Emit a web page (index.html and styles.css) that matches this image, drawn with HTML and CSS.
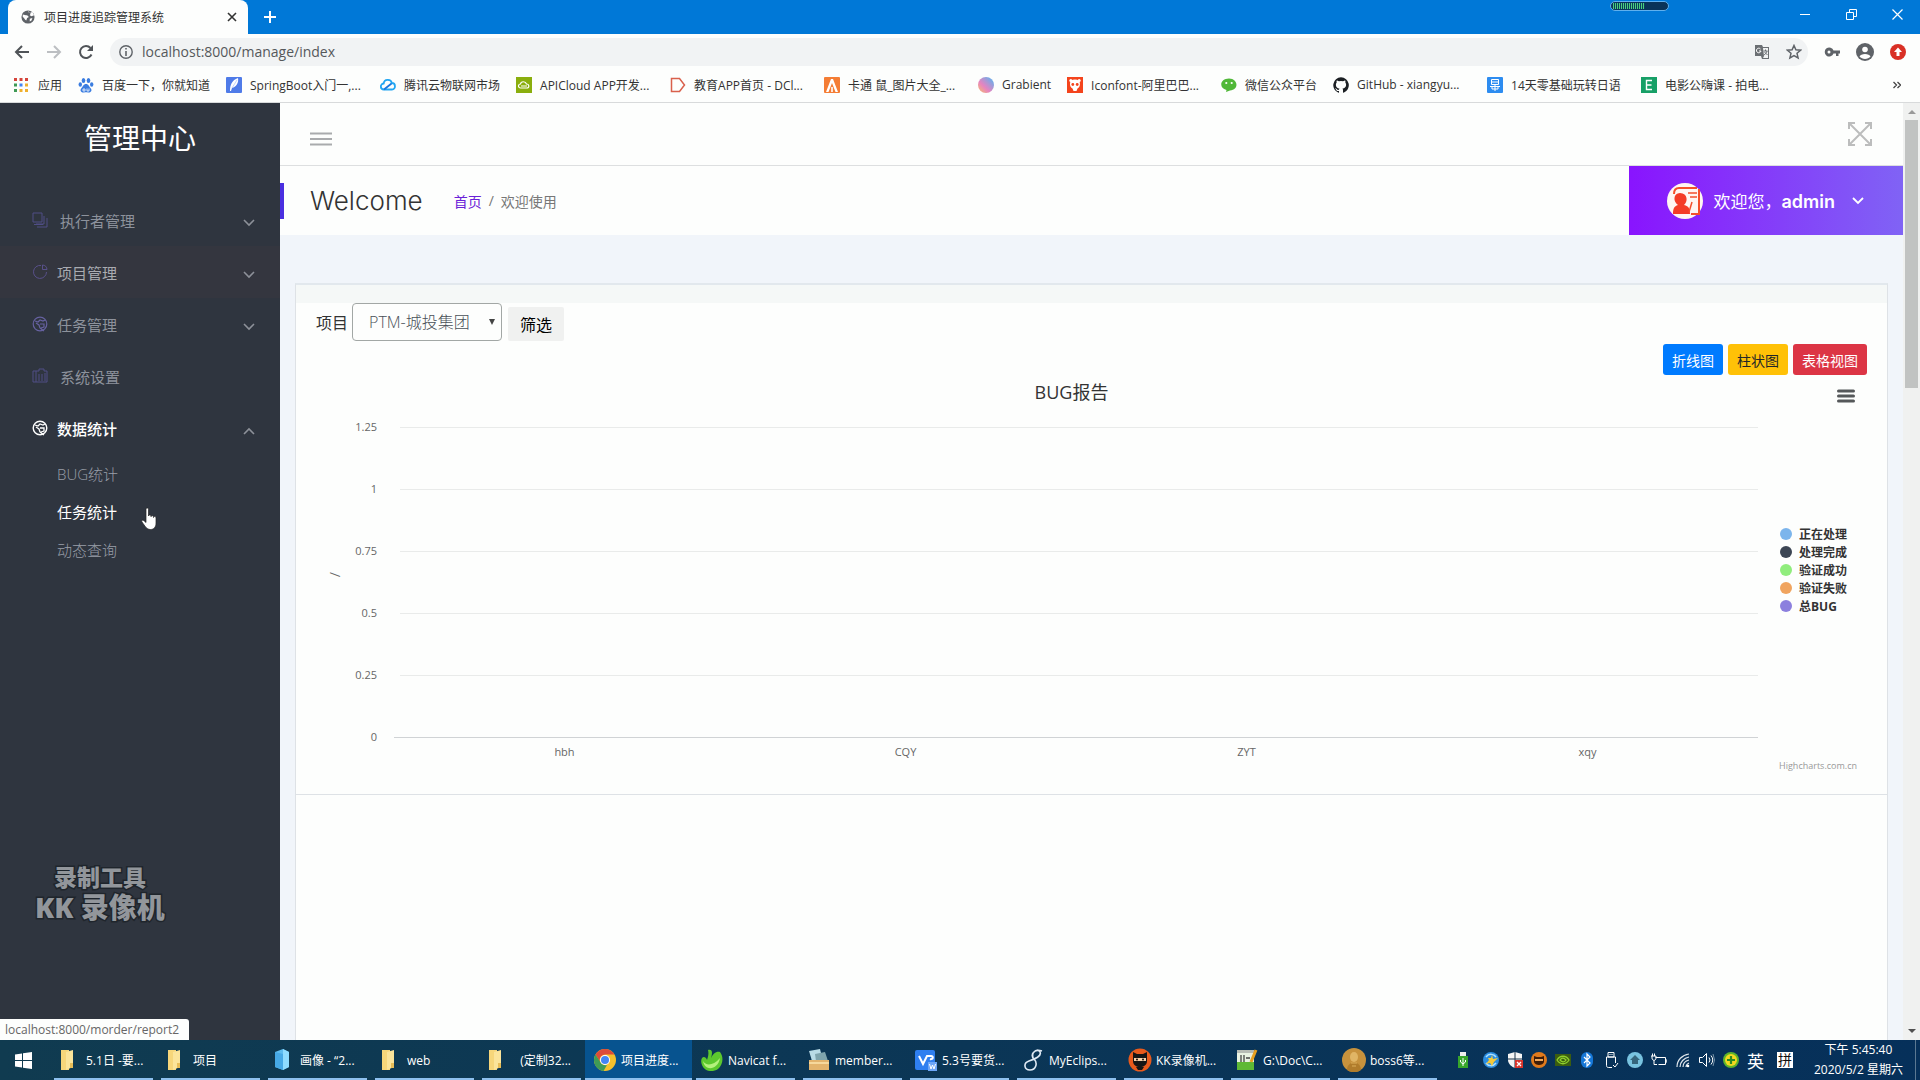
FILE: index.html
```html
<!DOCTYPE html>
<html lang="zh-CN">
<head>
  <meta charset="UTF-8" />
  <meta name="viewport" content="width=device-width, initial-scale=1" />
  <title>项目进度追踪管理系统</title>
  <link rel="stylesheet" href="styles.css">
</head>
<body>

  <!-- Browser window -->
  <header class="browser">
    <div class="titlebar">
      <div class="tab">
        <svg width="14" height="14" viewBox="0 0 16 16"><circle cx="8" cy="8" r="7.5" fill="#5f6368"/><path d="M2 5c2 0 3 1 5 1l2 2-2 1-1 3c-2-1-2-3-4-4zM8 1c0 2 2 2 3 2l2-1 2 4-3 1-2-1 1-2zM10 10l3-1-1 3-2 1z" fill="#fff"/></svg>
        <span class="tab-title">项目进度追踪管理系统</span>
        <button class="tab-close" aria-label="关闭标签页"><svg width="10" height="10" viewBox="0 0 10 10"><path d="M1 1l8 8M9 1l-8 8" stroke="#333" stroke-width="1.6"/></svg></button>
      </div>
      <button class="new-tab" aria-label="新标签页"><svg width="12" height="12" viewBox="0 0 12 12"><path d="M6 0v12M0 6h12" stroke="#fff" stroke-width="2"/></svg></button>
      <div class="window-controls">
        <button aria-label="最小化"><svg width="10" height="10" viewBox="0 0 10 10"><path d="M0 5.5h10" stroke="#fff"/></svg></button>
        <button aria-label="还原"><svg width="11" height="11" viewBox="0 0 11 11"><path d="M.5 3.5h7v7h-7zM3.500 3V.5h7v7H8" fill="none" stroke="#fff"/></svg></button>
        <button aria-label="关闭"><svg width="11" height="11" viewBox="0 0 11 11"><path d="M.5.5l10 10M10.500.5l-10 10" stroke="#fff" stroke-width="1.200"/></svg></button>
      </div>
    </div>

    <div class="toolbar">
      <button aria-label="后退"><svg width="16" height="16" viewBox="0 0 16 16"><path d="M15 8H2M8 2L2 8l6 6" fill="none" stroke="#505458" stroke-width="2"/></svg></button>
      <button aria-label="前进"><svg width="16" height="16" viewBox="0 0 16 16"><path d="M1 8h13M8 2l6 6-6 6" fill="none" stroke="#bcbfc2" stroke-width="2"/></svg></button>
      <button aria-label="重新加载"><svg width="16" height="16" viewBox="0 0 16 16"><path d="M13.500 10.500A6 6 0 1 1 12.500 4" fill="none" stroke="#505458" stroke-width="2"/><path d="M15 1v6H9z" fill="#505458"/></svg></button>
      <div class="address">
        <svg width="14" height="14" viewBox="0 0 14 14"><circle cx="7" cy="7" r="6.200" fill="none" stroke="#5f6368" stroke-width="1.400"/><path d="M7 6v5M7 3v1.600" stroke="#5f6368" stroke-width="1.600"/></svg>
        <input class="url" type="text" value="localhost:8000/manage/index" aria-label="地址栏">
        <svg width="16" height="16" viewBox="0 0 16 16"><path d="M1 1h7l1 2h6v12H8l-1-3H1z" fill="#6b6f73"/><path d="M9 4h5v10H9l1-2z" fill="#f1f3f4"/><path d="M6.500 5A2.300 2.300 0 1 0 7 7H5" fill="none" stroke="#fff"/><path d="M9.500 7h4M11.500 5.500V7M13 7c0 2-2 3-3 4M10.500 8l3 3" fill="none" stroke="#6b6f73"/></svg>
        <svg width="16" height="16" viewBox="0 0 16 16"><path d="M8 1.500l1.900 4.300 4.700.4-3.600 3.100 1.100 4.600L8 11.500l-4.100 2.400L5 9.300 1.400 6.200l4.700-.4z" fill="none" stroke="#5f6368" stroke-width="1.500"/></svg>
      </div>
      <svg width="16" height="10" viewBox="0 0 16 10"><path d="M9.500 3.600A4.500 4.500 0 1 0 9.500 6.400H12V9h2.500V6.400H16V3.600zM5 6.500a1.500 1.500 0 1 1 0-3 1.500 1.500 0 0 1 0 3z" fill="#5f6368"/></svg>
      <svg width="18" height="18" viewBox="0 0 18 18"><circle cx="9" cy="9" r="9" fill="#5f6368"/><circle cx="9" cy="6.500" r="2.800" fill="#fff"/><path d="M3.500 13.500c1-3.500 10-3.500 11 0-2.500 3.300-8.500 3.300-11 0z" fill="#fff"/></svg>
      <svg width="16" height="16" viewBox="0 0 16 16"><circle cx="8" cy="8" r="8" fill="#d93025"/><path d="M8 3.500l4 4.500H9.500v4h-3V8H4z" fill="#fff"/></svg>
    </div>

    <nav class="bookmarks" aria-label="书签栏">
      <a href="#"><svg width="16" height="14" viewBox="0 0 16 14"><path d="M0 0h3v3H0zM5.500 0h3v3h-3zM11 0h3v3h-3z" fill="#d5453b"/><path d="M0 5.500h3v3H0z" fill="#3f9a56"/><path d="M5.500 5.500h3v3h-3z" fill="#4285f4"/><path d="M11 5.500h3v3h-3zM5.500 11h3v3h-3zM11 11h3v3h-3z" fill="#f0b02e"/><path d="M0 11h3v3H0z" fill="#3f9a56"/></svg><span>应用</span></a>
      <a href="#"><svg width="16" height="16" viewBox="0 0 16 16"><g fill="#3b7de0"><ellipse cx="5.500" cy="3.500" rx="1.800" ry="2.500"/><ellipse cx="10.500" cy="3.500" rx="1.800" ry="2.500"/><ellipse cx="2.300" cy="7.500" rx="1.700" ry="2.200"/><ellipse cx="13.700" cy="7.500" rx="1.700" ry="2.200"/><path d="M8 7c2.500 0 3 2.500 4.500 4 2.500 3-.5 5-2.500 4.500-1.500-.4-2.500-.4-4 0C4 16 1 14 3.500 11 5 9.500 5.500 7 8 7z"/></g><path d="M5 12h2v2H5zM9 11.500V14h2v-2.500" fill="none" stroke="#fff" stroke-width=".8"/></svg><span>百度一下，你就知道</span></a>
      <a href="#" class="long"><svg width="16" height="16" viewBox="0 0 16 16"><rect width="16" height="16" rx="1" fill="#4f7be8"/><path d="M4 14C4 8 6 3 12 1c1 5-2 9-6 10l-1 3z" fill="#fff"/><path d="M6 11l5-8" stroke="#9bb6f5" stroke-width=".6"/></svg><span>SpringBoot入门一,...</span></a>
      <a href="#"><svg width="16" height="16" viewBox="0 0 16 16"><path d="M4 12.500a3 3 0 0 1-.3-6C4 1.800 11 1.500 11.800 6 16 6 16 12.500 12 12.500z" fill="none" stroke="#22a6f2" stroke-width="1.800"/><path d="M4 12.500l7.500-6" stroke="#1976e0" stroke-width="1.800"/></svg><span>腾讯云物联网市场</span></a>
      <a href="#" class="long"><svg width="16" height="16" viewBox="0 0 16 16"><rect width="16" height="16" fill="#8aae0d"/><path d="M4.500 11a2 2 0 0 1 0-4c.5-3 5-3 6 0 3 0 3 4 .5 4zM5 9h6" fill="none" stroke="#fff" stroke-width="1.200"/></svg><span>APICloud APP开发...</span></a>
      <a href="#" class="long"><svg width="16" height="16" viewBox="0 0 16 16"><path d="M1.500 1.500h8l5 6.500-5 6.500h-8z" fill="none" stroke="#d9604c" stroke-width="1.500"/></svg><span>教育APP首页 - DCl...</span></a>
      <a href="#" class="long"><svg width="16" height="16" viewBox="0 0 16 16"><rect width="16" height="16" rx="1" fill="#f47d35"/><path d="M2 15L7 2h2l5 13h-2.500L8 6l-3.500 9zM7.200 10h1.600v5H7.200z" fill="#fff"/></svg><span>卡通 鼠_图片大全_...</span></a>
      <a href="#"><svg width="16" height="16" viewBox="0 0 16 16"><defs><linearGradient id="grab" x1="0" y1="1" x2="1" y2="0"><stop offset="0" stop-color="#f7c06b"/><stop offset=".4" stop-color="#e684c0"/><stop offset="1" stop-color="#4bb8f5"/></linearGradient></defs><circle cx="8" cy="8" r="8" fill="url(#grab)"/></svg><span>Grabient</span></a>
      <a href="#" class="long"><svg width="16" height="16" viewBox="0 0 16 16"><rect width="16" height="16" fill="#f4441c"/><circle cx="3.800" cy="3.500" r="1.500" fill="#fff"/><circle cx="12.200" cy="3.500" r="1.500" fill="#fff"/><path d="M8 2.500c7 0 5.500 8 2.500 9L9.500 14h-3l-1-2.500C2.500 10.500 1 2.500 8 2.500z" fill="#fff"/><circle cx="5.800" cy="7.500" r="1.400" fill="#f4441c"/><circle cx="10.200" cy="7.500" r="1.400" fill="#f4441c"/></svg><span>Iconfont-阿里巴巴...</span></a>
      <a href="#"><svg width="16" height="16" viewBox="0 0 16 16"><path d="M8 1.500c9 0 10.500 11 1 12l-4 1.500.5-2C-3 10.500-.5 1.500 8 1.500z" fill="#50b838"/><circle cx="5.300" cy="6" r="1.100" fill="#fff"/><circle cx="10.700" cy="6" r="1.100" fill="#fff"/></svg><span>微信公众平台</span></a>
      <a href="#" class="long"><svg width="16" height="16" viewBox="0 0 16 16"><path d="M8 .2a8 8 0 0 0-2.500 15.500c.4.100.5-.2.500-.400v-1.400c-2.200.5-2.700-1-2.700-1-.4-.9-.9-1.200-.9-1.200-.7-.5.100-.5.100-.5.800.100 1.200.800 1.200.800.700 1.200 1.900.900 2.300.700.100-.5.300-.900.500-1.100-1.800-.2-3.600-.9-3.600-4 0-.8.300-1.600.8-2.100-.1-.2-.4-1 .1-2.100 0 0 .7-.2 2.200.8a7.500 7.500 0 0 1 4 0c1.500-1 2.200-.8 2.200-.8.4 1.100.2 1.900.1 2.100.5.5.8 1.300.8 2.100 0 3.100-1.900 3.800-3.700 4 .3.300.6.800.6 1.500v2.200c0 .2.100.5.600.4A8 8 0 0 0 8 .2z" fill="#1b1f23"/></svg><span>GitHub - xiangyu...</span></a>
      <a href="#" class="long"><svg width="16" height="16" viewBox="0 0 16 16"><rect width="16" height="16" rx="1" fill="#2d8cf0"/><path d="M4.500 2.500h7v5h-7zM4.500 5h7M3 9.500h10M8 7.500V14M5 9.500V12h6V9.500" fill="none" stroke="#fff"/></svg><span>14天零基础玩转日语</span></a>
      <a href="#"><svg width="16" height="16" viewBox="0 0 16 16"><rect width="16" height="16" fill="#17a067"/><path d="M11 3.500H5.500v9H11M5.500 8h5" fill="none" stroke="#fff" stroke-width="1.400"/></svg><span>电影公嗨课 - 拍电...</span></a>
      <button class="more" aria-label="更多书签"><svg width="8" height="8" viewBox="0 0 8 8"><path d="M.5 1l3 3-3 3M4.500 1l3 3-3 3" fill="none" stroke="#444" stroke-width="1.300"/></svg></button>
    </nav>
  </header>

  <div class="page">
    <aside class="sidebar">
      <h1>管理中心</h1>
      <ul class="menu">
        <li><a href="#"><svg width="16" height="16" viewBox="0 0 16 16"><path d="M1 1h9v9H1zM12 4v8H4M15 6v9H5M2 12.500h9" fill="none" stroke="#504e86"/></svg><span class="spaced">执行者管理</span><svg class="arrow" width="12" height="8" viewBox="0 0 12 8"><path d="M1 1l5 5 5-5" fill="none" stroke="#8d9199" stroke-width="1.600"/></svg></a></li>
        <li class="hover"><a href="#"><svg width="16" height="16" viewBox="0 0 16 16"><path d="M9 1.500a6.500 6.500 0 1 0 5.500 6.500M10.500 1v4.500H15C15 3 13 1 10.500 1z" fill="none" stroke="#58508a"/></svg><span>项目管理</span><svg class="arrow" width="12" height="8" viewBox="0 0 12 8"><path d="M1 1l5 5 5-5" fill="none" stroke="#8d9199" stroke-width="1.600"/></svg></a></li>
        <li><a href="#"><svg width="16" height="16" viewBox="0 0 16 16"><circle cx="8" cy="8" r="6.800" fill="none" stroke="#6661a0" stroke-width="1.200"/><path d="M3 5l3 1 2-2 3 1 2-1M4 7l3 2 1 3M8 8h4v3l-3 1M8 12l4 3" fill="none" stroke="#6661a0" stroke-width="1.200"/></svg><span>任务管理</span><svg class="arrow" width="12" height="8" viewBox="0 0 12 8"><path d="M1 1l5 5 5-5" fill="none" stroke="#8d9199" stroke-width="1.600"/></svg></a></li>
        <li><a href="#"><svg width="16" height="16" viewBox="0 0 16 16"><path d="M1 3h3v11H1zM4 3h3V1h5v2h3v11H4M7 6v7M10 6v7M13 5v8" fill="none" stroke="#504e86"/></svg><span class="spaced">系统设置</span></a></li>
        <li class="open">
          <a href="#"><svg width="16" height="16" viewBox="0 0 16 16"><circle cx="8" cy="8" r="6.800" fill="none" stroke="#fff" stroke-width="1.400"/><path d="M3 5l3 1 2-2 3 1 2-1M4 7l3 2 1 3M8 8h4v3l-3 1M8 12l4 3" fill="none" stroke="#fff" stroke-width="1.300"/></svg><span>数据统计</span><svg class="arrow" width="12" height="8" viewBox="0 0 12 8"><path d="M1 7l5-5 5 5" fill="none" stroke="#8d9199" stroke-width="1.600"/></svg></a>
          <ul class="submenu">
            <li><a href="#">BUG统计</a></li>
            <li><a href="#" class="current">任务统计</a></li>
            <li><a href="#">动态查询</a></li>
          </ul>
        </li>
      </ul>
    </aside>

    <main class="content">
      <div class="topbar">
        <button class="toggle" aria-label="菜单"><svg width="24" height="14" viewBox="0 0 24 14"><path d="M1 1.500h22M1 7h22M1 12.500h22" stroke="#a9abad" stroke-width="2"/></svg></button>
        <button aria-label="全屏"><svg width="24" height="24" viewBox="0 0 24 24"><path d="M1 7V1h6M17 1h6v6M23 17v6h-6M7 23H1v-6M1 1l22 22M23 1L1 23" fill="none" stroke="#bcbdbd" stroke-width="2"/></svg></button>
      </div>

      <div class="page-title">
        <h2>Welcome</h2>
        <p class="breadcrumb"><a href="#">首页</a><span>/</span><span>欢迎使用</span></p>
        <button class="user">
          <svg width="36" height="36" viewBox="0 0 36 36"><circle cx="18" cy="18" r="18" fill="#fff6f2"/><path d="M7 11c0-4 2-6 5-6h18M32 6v25H24" fill="none" stroke="#f4502c" stroke-width="2"/><path d="M21 10h9M23 14h7" stroke="#f4502c" stroke-width="1.600"/><path d="M13 10c8 0 8 9 4 12 5 1 6 4 6 9H6c0-5 1-8 5-9-5-3-5-12 2-12z" fill="#f43c26"/><path d="M25 19l-3 10" stroke="#f4502c" stroke-width="1.500"/></svg>
          <span class="user-name">欢迎您，<b>admin</b></span>
          <svg width="14" height="9" viewBox="0 0 14 9"><path d="M2 2l5 5 5-5" fill="none" stroke="#fff" stroke-width="1.800"/></svg>
        </button>
      </div>

      <section class="card report">
        <form class="filter">
          <label for="project">项目</label>
          <span class="select-box">
            <select id="project"><option>PTM-城投集团</option></select>
          </span>
          <button type="button">筛选</button>
        </form>
        <div class="views">
          <button class="blue">折线图</button>
          <button class="yellow">柱状图</button>
          <button class="red">表格视图</button>
        </div>

        <div class="chart">
          <div class="chart-head">
            <h3>BUG报告</h3>
            <button aria-label="图表菜单"><svg width="18" height="14" viewBox="0 0 18 14"><path d="M1.500 2h15M1.500 7h15M1.500 12h15" stroke="#55585a" stroke-width="3" stroke-linecap="round"/></svg></button>
          </div>
          <div class="chart-body">
            <span class="y-title">/</span>
            <ul class="y-labels"><li>1.25</li><li>1</li><li>0.75</li><li>0.5</li><li>0.25</li><li>0</li></ul>
            <div class="plot">
              <div class="grid-lines"><i></i><i></i><i></i><i></i><i></i></div>
              <ul class="x-labels"><li>hbh</li><li>CQY</li><li>ZYT</li><li>xqy</li></ul>
            </div>
            <div class="chart-side">
              <ul class="legend">
                <li class="doing">正在处理</li>
                <li class="done">处理完成</li>
                <li class="passed">验证成功</li>
                <li class="failed">验证失败</li>
                <li class="total">总BUG</li>
              </ul>
              <a class="credits" href="#">Highcharts.com.cn</a>
            </div>
          </div>
        </div>
      </section>
      <section class="card next"></section>
    </main>

    <div class="scrollbar">
      <svg width="8" height="5" viewBox="0 0 8 5"><path d="M0 5l4-4 4 4z" fill="#999"/></svg>
      <div class="thumb"></div>
      <svg width="8" height="5" viewBox="0 0 8 5"><path d="M0 0l4 4 4-4z" fill="#505050"/></svg>
    </div>

    <p class="watermark"><span>录制工具</span><span class="big">KK 录像机</span></p>
    <div class="status">localhost:8000/morder/report2</div>
  </div>

  <!-- Desktop taskbar -->
  <footer class="taskbar">
    <button class="start" aria-label="开始"><svg width="17" height="17" viewBox="0 0 17 17"><path d="M0 2.500l7-1V8H0zM8 1.300L17 0v8H8zM0 9h7v6.500l-7-1zM8 9h9v8l-9-1.300z" fill="#fff"/></svg></button>
    <div class="tasks">
      <button><svg width="24" height="24" viewBox="0 0 24 24"><path d="M3 2h8v20H3z" fill="#f6d67a"/><path d="M8 4l7-2v17l-7 3z" fill="#fbe49a"/><path d="M12 15h3v5h-3z" fill="#e7bd58"/></svg><span>5.1日 -要...</span></button>
      <button><svg width="24" height="24" viewBox="0 0 24 24"><path d="M3 2h8v20H3z" fill="#f6d67a"/><path d="M8 4l7-2v17l-7 3z" fill="#fbe49a"/><path d="M12 15h3v5h-3z" fill="#e7bd58"/></svg><span>项目</span></button>
      <button><svg width="24" height="24" viewBox="0 0 24 24"><path d="M3 4l8-3 6 3v15l-6 3-8-3z" fill="#5fbdf0"/><path d="M11 1l6 3v15l-6 3z" fill="#8fdcff"/><path d="M3 4l8 2v16l-8-3z" fill="#46a9e6"/></svg><span>画像 - “2...</span></button>
      <button><svg width="24" height="24" viewBox="0 0 24 24"><path d="M3 2h8v20H3z" fill="#f6d67a"/><path d="M8 4l7-2v17l-7 3z" fill="#fbe49a"/><path d="M12 15h3v5h-3z" fill="#e7bd58"/></svg><span>web</span></button>
      <button><svg width="24" height="24" viewBox="0 0 24 24"><path d="M3 2h8v20H3z" fill="#f6d67a"/><path d="M8 4l7-2v17l-7 3z" fill="#fbe49a"/><path d="M12 15h3v5h-3z" fill="#e7bd58"/></svg><span>&nbsp; (定制32...</span></button>
      <button class="active"><svg width="24" height="24" viewBox="0 0 24 24"><circle cx="12" cy="12" r="11" fill="#f5c02c"/><path d="M2.500 6.500A11 11 0 0 1 21.500 6.500H12a5.500 5.500 0 0 0-5 7.500z" fill="#dd4b39"/><path d="M2.500 6.500L8 15a5.500 5.500 0 0 0 6 2l-3.500 6A11 11 0 0 1 2.500 6.500z" fill="#3f9b56"/><circle cx="12" cy="12" r="5" fill="#fff"/><circle cx="12" cy="12" r="4" fill="#4285f4"/></svg><span>项目进度...</span></button>
      <button><svg width="24" height="24" viewBox="0 0 24 24"><path d="M8 2C12 1 13 4 11 10c2-4 5-7 9-6 4 5 3 13-2 17-6 4-14 2-16-4-2-5 0-8 2-8 2 0 3 3 3 3C8 9 9 6 8 2z" fill="#5cc82e"/><path d="M3 13c3 5 10 5 17-3-2 12-15 14-17 3z" fill="#b4f17c"/></svg><span>Navicat f...</span></button>
      <button><svg width="24" height="24" viewBox="0 0 24 24"><path d="M2 3l11-2 3 12H5z" fill="#b9dbe6"/><path d="M8 6l10-2 3 9H9z" fill="#7fa4ad"/><path d="M2 12h20v10H2z" fill="#e3b46d"/><path d="M2 14h20v2H2z" fill="#f6d89c"/></svg><span>member...</span></button>
      <button><svg width="24" height="24" viewBox="0 0 24 24"><rect x="1" y="2" width="20" height="20" rx="2" fill="#2f7ff0"/><path d="M5 8l4 8 4-8h4c3 0 2 4-1 3" fill="none" stroke="#fff" stroke-width="2"/><rect x="14" y="14" width="9" height="9" fill="#6da6f7"/><path d="M15.500 16l1.500 5 1.500-4 1.500 4 1.500-5" fill="none" stroke="#fff"/></svg><span>5.3号要货...</span></button>
      <button><svg width="24" height="24" viewBox="0 0 24 24"><path d="M21 3C13 0 9 7 13 11s2 11-4 11-7-7-1-9S21 8 19 4s-9 0-7 5" fill="none" stroke="#dfe9f4" stroke-width="1.600"/></svg><span>MyEclips...</span></button>
      <button><svg width="24" height="24" viewBox="0 0 24 24"><circle cx="12" cy="12" r="11.500" fill="#e85a1c"/><path d="M5 4l4 2h6l4-2v9c0 8-14 8-14 0z" fill="#151515"/><path d="M6 10h12v3H6z" fill="#f8cfa8"/><circle cx="9" cy="11.500" r="1" fill="#111"/><circle cx="15" cy="11.500" r="1" fill="#111"/><path d="M8 19h8l-2 3h-4z" fill="#151515"/></svg><span>KK录像机...</span></button>
      <button><svg width="24" height="24" viewBox="0 0 24 24"><path d="M2 2h17v20H2z" fill="#e9f2e2"/><path d="M2 14h17v8H2z" fill="#5fb935"/><path d="M2 2h17v3H2z" fill="#b7bcb5"/><path d="M6 7v7M9 7v7M11 10h4" stroke="#444" stroke-width="1.300"/><path d="M21 2l-5 12" stroke="#e7a020" stroke-width="3"/></svg><span>G:\Doc\C...</span></button>
      <button><svg width="24" height="24" viewBox="0 0 24 24"><circle cx="12" cy="12" r="12" fill="#c7923d"/><ellipse cx="12" cy="9" rx="4" ry="5" fill="#e0b565"/><path d="M5 22c0-10 14-10 14 0-4 3-10 3-14 0z" fill="#b07c2b"/><path d="M9 15h6M10 18h4" stroke="#dcae5b"/></svg><span>boss6等...</span></button>
    </div>
    <div class="tray">
      <svg viewBox="0 0 16 16"><path d="M5 0h6v4H5z" fill="#eee"/><path d="M3 4h10v12H3z" fill="#37a52b"/><path d="M8 6v8M5.500 8v2L8 12l2.500-2V8" fill="none" stroke="#fff"/></svg>
      <svg viewBox="0 0 16 16"><circle cx="8" cy="8" r="8" fill="#2b8de0"/><path d="M3 5c3-4 8-3 10 0M13 11c-3 4-8 3-10 0" fill="none" stroke="#aee0ff" stroke-width="1.500"/><path d="M9 3l1 4 5-1-4 4-2 4-2-3-4 1 3-4-1-2h3z" fill="#f4c93b"/></svg>
      <svg viewBox="0 0 16 16"><path d="M8 0l7 2v6c0 4-4 7-7 8-3-1-7-4-7-8V2z" fill="#f5f5f5"/><path d="M8 0v16M1 7h14" stroke="#1b3248"/><path d="M8 8h8v8H8z" fill="#d9342b"/><path d="M10 10l4 4M14 10l-4 4" stroke="#fff" stroke-width="1.300"/></svg>
      <svg viewBox="0 0 16 16"><circle cx="8" cy="8" r="8" fill="#e07a1c"/><path d="M3 4l3 1h4l3-1v6c-1 4-9 4-10 0z" fill="#3d1c08"/><path d="M4 7h8v2H4z" fill="#f0a95b"/></svg>
      <svg viewBox="0 0 16 16"><path d="M0 2h16v12H0z" fill="#3b5d10"/><path d="M2 8c3-5 9-5 12 0-3 5-9 5-12 0zM5 8c2-3 4-2 6 0-2 3-4 2-6 0z" fill="none" stroke="#8fce2b" stroke-width="1.300"/></svg>
      <svg viewBox="0 0 16 16"><rect x="2" width="12" height="16" rx="6" fill="#1577d8"/><path d="M5 5l6 6-3 3V2l3 3-6 6" fill="none" stroke="#fff" stroke-width="1.200"/></svg>
      <svg viewBox="0 0 16 16"><path d="M5 .5h6V5H5zM3.500 5h9v6M3.500 5v8.500c0 1 .5 2 2 2H9M7 2v1M9 2v1M10 13l2 2 3-4" fill="none" stroke="#fff"/></svg>
      <svg viewBox="0 0 16 16"><circle cx="8" cy="8" r="8" fill="#78c3e0"/><path d="M8 3l5 5h-2v4H5V8H3z" fill="#35657c"/></svg>
      <svg viewBox="0 0 16 16"><path d="M4.500 5.500h10v7h-7M14.500 8H16v2h-1.500M0 4h5v2c0 3-4 3-4 0V4M1.500 4V1.500M3.500 4V1.500M3 8v4.500h3" fill="none" stroke="#fff"/></svg>
      <svg viewBox="0 0 16 16"><path d="M2 15C2 8 7 3 14 2M5 15c0-5 4-9 9-10M8 15c0-4 2-6 6-7M11 15c0-2 1-3 3-4" fill="none" stroke="#dfe6ec" stroke-width="1.200"/><circle cx="13" cy="14" r="1.300" fill="#fff"/></svg>
      <svg viewBox="0 0 16 16"><path d="M.5 5.500h3l4-4v13l-4-4h-3z" fill="none" stroke="#fff"/><path d="M10 5.500q2 2.500 0 5M12 3.500q3.500 4.500 0 9" fill="none" stroke="#fff"/><path d="M14 2q3 6 0 12" fill="none" stroke="#7893a8"/></svg>
      <svg viewBox="0 0 16 16"><circle cx="8" cy="8" r="8" fill="#5db52c"/><circle cx="8" cy="8" r="6" fill="#f3d91f"/><path d="M8 4v8M4 8h8" stroke="#2e8c22" stroke-width="2.200"/></svg>
      <span class="ime">英</span>
      <span class="ime pin">拼</span>
    </div>
    <p class="clock"><span>下午 5:45:40</span><span>2020/5/2 星期六</span></p>
  </footer>

  <div class="recorder"></div>
  <svg class="pointer" width="18" height="24" viewBox="0 0 18 24"><path d="M5 2.500c0-2 2.500-2 2.500 0V9c0-1.500 2.500-1.500 2.500 0v.7c0-1.400 2.500-1.400 2.500 0v.8c0-1.300 2.500-1.300 2.500.2V16c0 4-2 6.500-5.500 6.500C5.500 22.500 4 19 1 15c-1-1.500.5-2.500 2-1.300L5 15.500z" fill="#fff" stroke="#222" stroke-width=".7"/></svg>

</body>
</html>
```
FILE: styles.css
```css
/* Reset */
* {
  box-sizing: border-box;
  margin: 0;
  padding: 0;
}

body {
  font-family: "Open Sans", "Noto Sans CJK SC", sans-serif;
  font-size: 12px;
  height: 100vh;
  display: flex;
  flex-direction: column;
  overflow: hidden;
  color: #333;
}

ul {
  list-style: none;
}

a {
  color: inherit;
  text-decoration: none;
}

button {
  font: inherit;
  color: inherit;
  background: none;
  border: none;
  cursor: pointer;
}

svg {
  display: block;
  flex-shrink: 0;
}

/* Browser */
.browser {
  background: #fdfefd;
  border-bottom: 1px solid #d8dadb;
  flex-shrink: 0;
}

.titlebar {
  display: flex;
  height: 34px;
  background: #0078d7;
  padding-left: 8px;
}

.tab {
  display: flex;
  align-items: center;
  width: 240px;
  padding: 0 11px 0 13px;
  background: #fdfefd;
  border-radius: 8px 8px 0 0;
}

.tab-title {
  flex: 1;
  padding-left: 9px;
}

.new-tab {
  padding: 0 16px;
}

.window-controls {
  display: flex;
  align-items: flex-start;
  margin-left: auto;
}

.window-controls button {
  display: flex;
  align-items: center;
  justify-content: center;
  width: 46px;
  height: 28px;
}

.toolbar {
  display: flex;
  align-items: center;
  gap: 16px;
  height: 35px;
  padding: 0 14px;
}

.address {
  flex: 1;
  display: flex;
  align-items: center;
  gap: 16px;
  height: 28px;
  padding: 0 6px 0 9px;
  background: #f1f3f4;
  border-radius: 14px;
}

.url {
  flex: 1;
  margin-left: -7px;
  border: none;
  outline: none;
  background: none;
  font: inherit;
  font-size: 14px;
  color: #55585b;
}

.bookmarks {
  display: flex;
  align-items: center;
  gap: 16px;
  height: 33px;
  padding: 0 19px 2px 14px;
  white-space: nowrap;
}

.bookmarks a {
  display: flex;
  align-items: center;
  gap: 8px;
}

.bookmarks .long {
  width: 138px;
}

.more {
  margin-left: auto;
}

/* Page */
.page {
  flex: 1;
  min-height: 0;
  display: flex;
  position: relative;
}

.sidebar {
  width: 280px;
  flex-shrink: 0;
  background: #2f353f;
  color: #8d929c;
  font-size: 15px;
}

.sidebar h1 {
  font-size: 28px;
  font-weight: 400;
  line-height: 40px;
  padding: 15px 0 36px;
  text-align: center;
  color: #fff;
}

.menu > li > a {
  display: flex;
  align-items: center;
  height: 52px;
  padding: 0 25px 0 32px;
  gap: 9px;
}

.menu .hover {
  background: #34363f;
  color: #a9abb1;
}

.menu .open > a {
  color: #fff;
  font-weight: 500;
}

.menu .spaced {
  padding-left: 3px;
}

.menu .arrow {
  margin-top: 5px;
  margin-left: auto;
}

.submenu {
  padding-top: 1px;
  font-weight: 300;
  color: #9a9fa9;
}

.submenu a {
  display: block;
  line-height: 38px;
  padding-left: 57px;
}

.submenu .current {
  color: #fff;
  font-weight: 400;
}

.content {
  flex: 1;
  min-width: 0;
  display: flex;
  flex-direction: column;
  background: #f1f5fa;
  overflow: hidden;
}

.topbar {
  display: flex;
  align-items: center;
  justify-content: space-between;
  height: 63px;
  padding: 0 31px 0 29px;
  background: #fdfefd;
  border-bottom: 1px solid #dddfe0;
  flex-shrink: 0;
}

.toggle {
  padding-top: 10px;
}

.page-title {
  display: flex;
  align-items: center;
  height: 69px;
  background: #fdfefd;
  flex-shrink: 0;
}

.page-title::before {
  content: "";
  width: 4px;
  height: 36px;
  background: #4a2fe0;
}

.page-title h2 {
  padding: 0 31px 0 26px;
  font-family: Inter, sans-serif;
  font-size: 26px;
  font-weight: 300;
  color: #333;
}

.breadcrumb {
  display: flex;
  gap: 7px;
  font-size: 14px;
  color: #777;
}

.breadcrumb a {
  color: #6a22d8;
}

.user {
  display: flex;
  align-items: center;
  gap: 11px;
  height: 100%;
  margin-left: auto;
  padding: 0 38px;
  background: linear-gradient(to right, #8914fe, #8063f5);
  color: #fff;
}

.user-name {
  font-size: 17px;
  padding-right: 5px;
}

.user-name b {
  font-family: Inter, sans-serif;
  font-size: 18px;
  font-weight: 600;
}

/* Cards */
.card {
  margin: 0 15px;
  background: #fdfefd;
  border: 1px solid #dee2e6;
}

.report {
  margin-top: 48px;
  padding: 0 20px 22px;
  border-top: 2px solid #e2e8ed;
}

.report::before {
  content: "";
  display: block;
  height: 18px;
  margin: 0 -20px;
  background: #f5f8f7;
}

.next {
  flex: 1;
  border-top: none;
  border-bottom: none;
}

.filter {
  display: flex;
  align-items: center;
  gap: 4px;
  font-size: 16px;
}

.select-box {
  position: relative;
  color: #495057;
}

.select-box::after {
  content: "";
  position: absolute;
  right: 7px;
  top: 16px;
  border: 3px solid transparent;
  border-top: 6px solid #444;
  border-bottom: none;
}

.select-box select {
  display: block;
  width: 150px;
  height: 38px;
  padding: 0 16px;
  appearance: none;
  border: 1px solid #a2a7a5;
  border-radius: 4px;
  background: #fdfefd;
  color: inherit;
  font: inherit;
  font-weight: 300;
}

.filter button {
  height: 34px;
  margin: 4px 0 0 2px;
  padding: 0 12px;
  background: #f0f1f0;
  border-radius: 2px;
  color: #000;
}

.views {
  display: flex;
  justify-content: flex-end;
  gap: 5px;
  padding-top: 3px;
}

.views button {
  height: 31px;
  padding: 0 9px;
  border-radius: 3px;
  font-size: 14px;
  color: #fff;
}

.views .blue {
  background: #007bff;
}

.views .yellow {
  background: #ffc107;
  color: #212529;
}

.views .red {
  background: #dc3545;
}

/* Chart */
.chart-head {
  display: flex;
  align-items: center;
  justify-content: center;
  height: 32px;
  padding: 0 12px 0 0;
}

.chart-head h3 {
  flex: 1;
  padding-right: 10px;
  font-size: 18px;
  font-weight: 400;
  text-align: center;
  color: #333;
}

.chart-head button {
  padding-top: 10px;
}

.chart-body {
  display: flex;
  height: 376px;
  margin-top: -11px;
  font-size: 11px;
  color: #666;
}

.y-title {
  align-self: center;
  width: 38px;
  margin-bottom: 20px;
  font-size: 14px;
  text-align: center;
  transform: rotate(90deg);
}

.y-labels {
  width: 23px;
  line-height: 62px;
  text-align: right;
  white-space: nowrap;
}

.plot {
  flex: 1;
  padding-top: 31px;
  margin-left: 17px;
}

.grid-lines {
  border-bottom: 1px solid #d0d3d5;
}

.grid-lines i {
  display: block;
  height: 62px;
  margin-left: 6px;
  border-top: 1px solid #e9ebea;
}

.x-labels {
  display: flex;
  line-height: 27px;
}

.x-labels li {
  flex: 1;
  text-align: center;
}

.chart-side {
  display: flex;
  flex-direction: column;
  justify-content: space-between;
  width: 109px;
  padding: 129px 10px 0 22px;
}

.legend {
  font-size: 12px;
  font-weight: 700;
  color: #333;
}

.legend li {
  display: flex;
  align-items: center;
  gap: 7px;
  height: 18px;
}

.legend li::before {
  content: "";
  width: 12px;
  height: 12px;
  border-radius: 50%;
  background: #7cb5ec;
}

.legend .done::before {
  background: #3c4654;
}

.legend .passed::before {
  background: #90ed7d;
}

.legend .failed::before {
  background: #f0a45f;
}

.legend .total::before {
  background: #8c80de;
}

.credits {
  align-self: flex-end;
  font-size: 9px;
  color: #999;
}

/* Scrollbar */
.scrollbar {
  display: flex;
  flex-direction: column;
  align-items: center;
  width: 17px;
  padding: 6px 0;
  background: #f0f1f0;
}

.thumb {
  width: 13px;
  height: 29%;
  margin: 6px 0 auto;
  background: #c1c3c2;
}

/* Overlays */
.watermark {
  position: absolute;
  left: 35px;
  bottom: 118px;
  display: flex;
  flex-direction: column;
  align-items: center;
  font-size: 23px;
  font-weight: 900;
  line-height: 30px;
  color: #92969b;
  -webkit-text-stroke: 3px #1f252c;
  paint-order: stroke fill;
}

.watermark .big {
  font-size: 28px;
}

.status {
  position: absolute;
  left: 0;
  bottom: 0;
  padding: 0 10px 0 5px;
  line-height: 21px;
  background: #fdfefd;
  border-radius: 0 3px 0 0;
  color: #666;
}

.recorder {
  position: absolute;
  top: 1px;
  right: 251px;
  width: 59px;
  height: 10px;
  border: 1px solid #5fb0ee;
  border-radius: 5px;
  background: repeating-linear-gradient(to right, #4bd07c 0 1px, #0a3d5c 1px 2px) 2px 1px / 32px 6px no-repeat #0a3358;
}

.pointer {
  position: absolute;
  left: 141px;
  top: 507px;
}

/* Taskbar */
.taskbar {
  display: flex;
  height: 40px;
  flex-shrink: 0;
  background: linear-gradient(to right, #103b50, #0b3656 50%, #06305a);
  color: #fff;
  white-space: nowrap;
}

.start {
  padding: 0 18px 0 15px;
}

.tasks {
  display: flex;
}

.tasks button {
  position: relative;
  display: flex;
  align-items: center;
  gap: 4px;
  width: 107px;
  padding-left: 8px;
}

.tasks button::after {
  content: "";
  position: absolute;
  left: 4px;
  right: 4px;
  bottom: 0;
  height: 2px;
  background: #8ec0ee;
}

.tasks .active {
  background: #07538f;
}

.tasks .active::after {
  left: 0;
  right: 0;
}

.tray {
  display: flex;
  align-items: center;
  gap: 8px;
  margin-left: auto;
}

.tray svg {
  width: 16px;
  height: 16px;
}

.tray svg:first-child {
  margin-right: 4px;
}

.ime {
  font-size: 17px;
}

.pin {
  width: 16px;
  margin-left: 5px;
  background: #fff;
  color: #111;
  font-size: 14px;
  line-height: 16px;
  text-align: center;
}

.clock {
  display: flex;
  flex-direction: column;
  align-items: center;
  justify-content: center;
  margin-right: 4px;
  padding: 0 12px 0 21px;
  border-right: 1px solid #5b7892;
  line-height: 20px;
}
```
